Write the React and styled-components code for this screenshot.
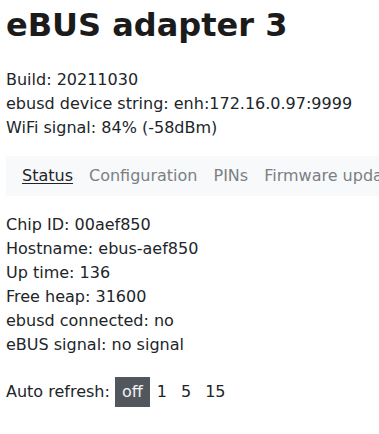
import styled, { createGlobalStyle } from "styled-components";

const GlobalStyle = createGlobalStyle`
  html, body {
    margin: 0;
    padding: 0;
    overflow-x: hidden;
    background: #fff;
  }
  body {
    font-family: "DejaVu Sans", sans-serif;
    font-size: 16px;
    line-height: 1.5;
    color: #212529;
  }
`;

const Page = styled.div`
  padding: 6px 0 8px 6px;
`;

const Title = styled.h1`
  margin: 0 0 23.6px;
  font-size: 32px;
  line-height: 1.2;
  font-weight: bold;
  color: #1b1b1b;
`;

const InfoList = styled.div`
  display: flex;
  flex-direction: column;
`;

const Line = styled.div`
  white-space: nowrap;
`;

const Nav = styled.nav`
  display: flex;
  flex-wrap: nowrap;
  white-space: nowrap;
  overflow: hidden;
  margin: 16px 0 17px;
  padding: 8px;
  background-color: #f8f9fa;
`;

const NavLink = styled.a`
  padding: 0 8px;
  color: ${(p) => (p.$active ? "#212529" : "#7b8085")};
  text-decoration: ${(p) => (p.$active ? "underline" : "none")};
  text-underline-offset: 2px;
  cursor: pointer;
`;

const Refresh = styled.div`
  margin-top: 20px;
  white-space: nowrap;
`;

const RefreshOption = styled.a`
  display: inline-block;
  padding: 3px 7px;
  line-height: 24px;
  vertical-align: middle;
  color: ${(p) => (p.$active ? "#f1f3f5" : "#212529")};
  background-color: ${(p) => (p.$active ? "#52575d" : "transparent")};
  cursor: pointer;
`;

const RefreshLabel = styled.span`
  vertical-align: middle;
`;

const build = [
  "Build: 20211030",
  "ebusd device string: enh:172.16.0.97:9999",
  "WiFi signal: 84% (-58dBm)",
];

const status = [
  "Chip ID: 00aef850",
  "Hostname: ebus-aef850",
  "Up time: 136",
  "Free heap: 31600",
  "ebusd connected: no",
  "eBUS signal: no signal",
];

const tabs = ["Status", "Configuration", "PINs", "Firmware update"];

export default function App() {
  return (
    <>
      <GlobalStyle />
      <Page>
        <Title>eBUS adapter 3</Title>
        <InfoList>
          {build.map((t) => (
            <Line key={t}>{t}</Line>
          ))}
        </InfoList>
        <Nav>
          {tabs.map((t, i) => (
            <NavLink key={t} $active={i === 0}>
              {t}
            </NavLink>
          ))}
        </Nav>
        <InfoList>
          {status.map((t) => (
            <Line key={t}>{t}</Line>
          ))}
        </InfoList>
        <Refresh>
          <RefreshLabel>Auto refresh: </RefreshLabel>
          {["off", "1", "5", "15"].map((o, i) => (
            <RefreshOption key={o} $active={i === 0}>
              {o}
            </RefreshOption>
          ))}
        </Refresh>
      </Page>
    </>
  );
}
